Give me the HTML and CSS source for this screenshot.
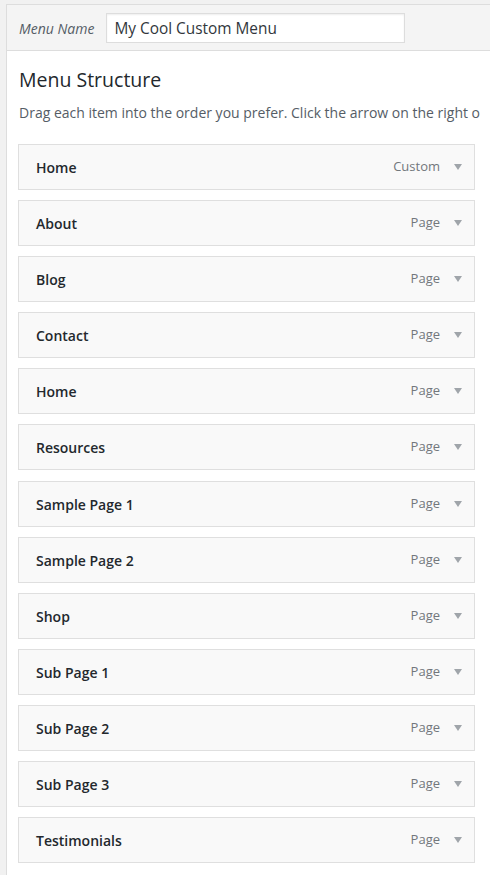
FILE: index.html
```html
<!DOCTYPE html>
<html>
<head>
<meta charset="utf-8">
<link rel="stylesheet" href="styles.css">
</head>
<body>
<div class="menu-edit">
  <div class="menu-header">
    <label class="menu-name-label" for="menu-name">Menu Name</label>
    <input id="menu-name" class="menu-name-input" type="text" value="My Cool Custom Menu">
  </div>
  <div class="menu-body">
    <h3 class="title">Menu Structure</h3>
    <p class="desc">Drag each item into the order you prefer. Click the arrow on the right o</p>
    <ul class="menu-items">
      <li class="item"><span class="item-title">Home</span><span class="item-controls"><span class="item-type">Custom</span><span class="arrow"></span></span></li>
      <li class="item"><span class="item-title">About</span><span class="item-controls"><span class="item-type">Page</span><span class="arrow"></span></span></li>
      <li class="item"><span class="item-title">Blog</span><span class="item-controls"><span class="item-type">Page</span><span class="arrow"></span></span></li>
      <li class="item"><span class="item-title">Contact</span><span class="item-controls"><span class="item-type">Page</span><span class="arrow"></span></span></li>
      <li class="item"><span class="item-title">Home</span><span class="item-controls"><span class="item-type">Page</span><span class="arrow"></span></span></li>
      <li class="item"><span class="item-title">Resources</span><span class="item-controls"><span class="item-type">Page</span><span class="arrow"></span></span></li>
      <li class="item"><span class="item-title">Sample Page 1</span><span class="item-controls"><span class="item-type">Page</span><span class="arrow"></span></span></li>
      <li class="item"><span class="item-title">Sample Page 2</span><span class="item-controls"><span class="item-type">Page</span><span class="arrow"></span></span></li>
      <li class="item"><span class="item-title">Shop</span><span class="item-controls"><span class="item-type">Page</span><span class="arrow"></span></span></li>
      <li class="item"><span class="item-title">Sub Page 1</span><span class="item-controls"><span class="item-type">Page</span><span class="arrow"></span></span></li>
      <li class="item"><span class="item-title">Sub Page 2</span><span class="item-controls"><span class="item-type">Page</span><span class="arrow"></span></span></li>
      <li class="item"><span class="item-title">Sub Page 3</span><span class="item-controls"><span class="item-type">Page</span><span class="arrow"></span></span></li>
      <li class="item"><span class="item-title">Testimonials</span><span class="item-controls"><span class="item-type">Page</span><span class="arrow"></span></span></li>
    </ul>
  </div>
</div>
</body>
</html>
```

FILE: styles.css
```css
html, body {
  margin: 0;
  padding: 0;
  background: #f1f1f1;
  font-family: "Open Sans", "Noto Sans", sans-serif;
  font-size: 14px;
  color: #444;
  overflow: hidden;
}

.menu-edit {
  margin: 4px 0 0 6px;
  border-top: 1px solid #dddddd;
  border-left: 1px solid #dddddd;
  background: #fff;
  height: 900px;
}

.menu-header {
  display: flex;
  align-items: center;
  background: #f4f4f4;
  border-bottom: 1px solid #dddddd;
  padding: 8px 12px 7px 12px;
}

.menu-name-label {
  font-style: italic;
  color: #555d66;
  font-size: 14px;
  margin-right: 12px;
}

.menu-name-input {
  width: 299px;
  height: 30px;
  box-sizing: border-box;
  border: 1px solid #dddddd;
  box-shadow: inset 0 1px 2px rgba(0,0,0,0.07);
  background: #fff;
  font-family: "Open Sans", "Noto Sans", sans-serif;
  font-size: 15.4px;
  color: #32373c;
  padding: 0 7px;
  margin: 0;
  outline: none;
}

.menu-body {
  padding: 0 11px;
}

.title {
  margin: 16px 0 0 1px;
  font-size: 19.5px;
  font-weight: 400;
  color: #23282d;
  line-height: 26px;
}

.desc {
  margin: 10px 0 0 1px;
  white-space: nowrap;
  font-size: 14px;
  color: #555d66;
  line-height: 20px;
}

.menu-items {
  list-style: none;
  margin: 21px 0 0 0;
  padding: 0;
}

.item {
  width: 457px;
  height: 46px;
  box-sizing: border-box;
  border: 1px solid #dfdfdf;
  background: #f9f9f9;
  display: flex;
  align-items: center;
  justify-content: space-between;
  padding: 0 12px 0 17px;
  margin-bottom: 10.1px;
}

.item-title {
  font-weight: 600;
  color: #23282d;
  font-size: 14px;
  margin-top: 1px;
}

.item-controls {
  display: flex;
  align-items: center;
  margin-top: -2px;
}

.item-type {
  color: #72777c;
  font-size: 13px;
}

.arrow {
  width: 0;
  height: 0;
  border-left: 4px solid transparent;
  border-right: 4px solid transparent;
  border-top: 6px solid #a0a5aa;
  margin-left: 14px;
  margin-top: 2px;
}
```
